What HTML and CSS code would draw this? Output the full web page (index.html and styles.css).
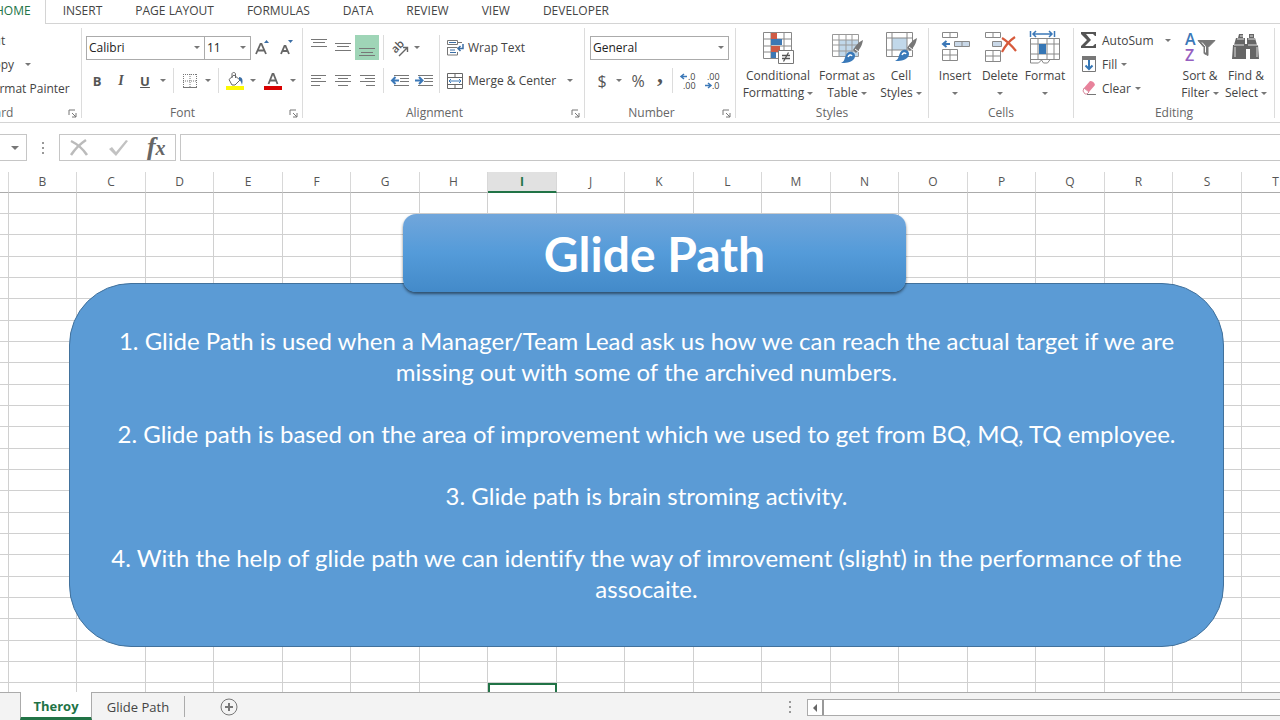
FILE: index.html
```html
<!DOCTYPE html>
<html lang="en">
<head>
  <meta charset="UTF-8">
  <title>Glide Path</title>
  <link rel="stylesheet" href="styles.css">
</head>
<body>
  <nav class="tabs">
    <button class="tab active">HOME</button>
    <button class="tab">INSERT</button>
    <button class="tab">PAGE LAYOUT</button>
    <button class="tab">FORMULAS</button>
    <button class="tab">DATA</button>
    <button class="tab">REVIEW</button>
    <button class="tab">VIEW</button>
    <button class="tab">DEVELOPER</button>
  </nav>

  <div class="ribbon">
    <section class="group clipboard">
      <div class="stack">
        <button class="small">Cut</button>
        <button class="small">Copy <i class="arrow far"></i></button>
        <button class="small">Format Painter</button>
      </div>
      <div class="caption">Clipboard</div>
      <button class="launcher" aria-label="Clipboard settings"><svg width="9" height="9" viewBox="0 0 9 9"><path d="M1 6V1h6M4 4l4 4M8 4v4H4"/></svg></button>
    </section>

    <section class="group font">
      <div class="row">
        <span class="combo family"><select aria-label="Font"><option>Calibri</option></select></span>
        <span class="combo size"><select aria-label="Font size"><option>11</option></select></span>
        <button class="tool grow" aria-label="Increase font size"><svg width="18" height="20" viewBox="0 0 18 20"><path d="M2 16 6.500 6h1L12 16M4 12.500h6" fill="none" stroke="#666" stroke-width="1.800"/><path d="M10 5l2.500-3L15 5z" fill="#3b6ea5"/></svg></button>
        <button class="tool" aria-label="Decrease font size"><svg width="18" height="20" viewBox="0 0 18 20"><path d="M3 16 6.500 8h1L11 16M5 13h4" fill="none" stroke="#666" stroke-width="1.800"/><path d="M10 2h5l-2.500 3z" fill="#3b6ea5"/></svg></button>
      </div>
      <div class="row">
        <button class="tool bold">B</button>
        <button class="tool italic">I</button>
        <button class="tool under">U</button>
        <button class="drop" aria-label="Underline styles"><i class="arrow"></i></button>
        <span class="sep"></span>
        <button class="tool" aria-label="Borders"><svg width="16" height="16" viewBox="0 0 16 16" fill="none" stroke="#777"><path stroke-dasharray="1 1" d="M1.500 1v13M14.500 1v13M8 1v13M1 1.500h14M1 8h14"/><path d="M1 14.500h14"/></svg></button>
        <button class="drop" aria-label="Border styles"><i class="arrow"></i></button>
        <span class="sep"></span>
        <button class="tool" aria-label="Fill color"><svg width="20" height="20" viewBox="0 0 20 20"><path d="M4 8.500 9 4l6 5-5 5H7z" fill="#fff" stroke="#666"/><path d="M7 7V3c0-2 3.500-2 3.500 0v4" fill="none" stroke="#666"/><path d="M14 6c4 0 4 4 3 8-1-3-1-4-3-5z" fill="#3b6ea5"/><path d="M1 15h18v4H1z" fill="#fdf905"/></svg></button>
        <button class="drop" aria-label="More fill colors"><i class="arrow"></i></button>
        <button class="tool wide" aria-label="Font color"><svg width="20" height="20" viewBox="0 0 20 20"><path d="M5.500 13 9.500 3h1l4 10M7 9.500h6" fill="none" stroke="#666" stroke-width="1.800"/><path d="M1 15h18v4H1z" fill="#d80000"/></svg></button>
        <button class="drop" aria-label="More font colors"><i class="arrow"></i></button>
      </div>
      <div class="caption">Font</div>
      <button class="launcher" aria-label="Font settings"><svg width="9" height="9" viewBox="0 0 9 9"><path d="M1 6V1h6M4 4l4 4M8 4v4H4"/></svg></button>
    </section>

    <section class="group alignment">
      <div class="halves">
        <div class="aligns">
          <div class="row">
            <button class="tool" aria-label="Top align"><svg width="16" height="20" viewBox="0 0 16 20" class="lines"><path d="M0 1.500h16M2 4.500h12M0 8.500h16"/></svg></button>
            <button class="tool" aria-label="Middle align"><svg width="16" height="20" viewBox="0 0 16 20" class="lines"><path d="M0 5.500h16M2 8.500h12M0 12.500h16"/></svg></button>
            <button class="tool on" aria-label="Bottom align"><svg width="16" height="20" viewBox="0 0 16 20" class="lines"><path d="M0 10.500h16M2 14.500h12M0 17.500h16"/></svg></button>
            <span class="sep"></span>
            <button class="tool" aria-label="Orientation"><svg width="18" height="18" viewBox="0 0 18 18"><text x="1" y="12" transform="rotate(-45 6 9)" font-size="11" font-weight="600" fill="#555">ab</text><path d="M8 17l8-8M12 8.500h4.500V13" fill="none" stroke="#666" stroke-width="1.400"/></svg></button>
            <button class="drop slim" aria-label="Orientation styles"><i class="arrow"></i></button>
          </div>
          <div class="row">
            <button class="tool" aria-label="Align left"><svg width="16" height="14" viewBox="0 0 16 14" class="lines"><path d="M0 1.500h15M0 4.500h10M0 7.500h15M0 11.500h9"/></svg></button>
            <button class="tool" aria-label="Center"><svg width="16" height="14" viewBox="0 0 16 14" class="lines"><path d="M0 1.500h16M3 4.500h10M0 7.500h16M3 11.500h10"/></svg></button>
            <button class="tool" aria-label="Align right"><svg width="16" height="14" viewBox="0 0 16 14" class="lines"><path d="M1 1.500h15M6 4.500h10M1 7.500h15M7 11.500h9"/></svg></button>
            <span class="sep"></span>
            <button class="tool" aria-label="Decrease indent"><svg width="18" height="14" viewBox="0 0 18 14" class="lines"><path d="M3 1.500h15M9 4.500h9M9 7.500h9M3 11.500h15"/><path class="blue" d="M1 6.500h7M4.500 3 1 6.500 4.500 10"/></svg></button>
            <button class="tool" aria-label="Increase indent"><svg width="18" height="14" viewBox="0 0 18 14" class="lines"><path d="M3 1.500h15M9 4.500h9M9 7.500h9M3 11.500h15"/><path class="blue" d="M0 6.500h7M4 3l3.500 3.500L4 10"/></svg></button>
          </div>
        </div>
        <div class="wraps">
          <button class="small"><svg width="18" height="18" viewBox="0 0 18 18" fill="none" stroke="#777"><path d="M1.500 1.500h10v4h-10zM1.500 8.500h10M1.500 8v8h10v-3M11 3.500h5"/><path d="M3 3.500h7M4 11h5M4 13.500h6" stroke="#3b6ea5"/><path d="M17 5v4.500h-5M14.500 7 12 9.500l2.500 2.500" stroke="#3b6ea5" stroke-width="1.500"/></svg>Wrap Text</button>
          <button class="small"><svg width="18" height="18" viewBox="0 0 18 18" fill="none" stroke="#666"><path d="M1.500 1.500h15v15h-15zM1 5.500h16M1 12.500h16M9 1v4M9 13v4"/><path d="M3 9h12M5 7 3 9l2 2M13 7l2 2-2 2" stroke="#3b78b8"/></svg>Merge &amp; Center <i class="arrow far"></i></button>
        </div>
      </div>
      <div class="caption">Alignment</div>
      <button class="launcher" aria-label="Alignment settings"><svg width="9" height="9" viewBox="0 0 9 9"><path d="M1 6V1h6M4 4l4 4M8 4v4H4"/></svg></button>
    </section>

    <section class="group number">
      <div class="row">
        <span class="combo format"><select aria-label="Number format"><option>General</option></select></span>
      </div>
      <div class="row">
        <button class="tool big">$</button>
        <button class="drop slim" aria-label="Currencies"><i class="arrow"></i></button>
        <button class="tool big wide">%</button>
        <button class="tool comma">,</button>
        <span class="sep"></span>
        <button class="tool" aria-label="Increase decimal"><svg width="18" height="18" viewBox="0 0 18 18" class="decimals"><text x="8" y="8">.0</text><text x="3" y="17">.00</text><path d="M1 4.500h6M4 2 1 4.500 4 7"/></svg></button>
        <button class="tool" aria-label="Decrease decimal"><svg width="18" height="18" viewBox="0 0 18 18" class="decimals"><text x="3" y="8">.00</text><text x="8" y="17">.0</text><path d="M1 13.500h6M4 11l3 2.500L4 16"/></svg></button>
      </div>
      <div class="caption">Number</div>
      <button class="launcher" aria-label="Number settings"><svg width="9" height="9" viewBox="0 0 9 9"><path d="M1 6V1h6M4 4l4 4M8 4v4H4"/></svg></button>
    </section>

    <section class="group styles">
      <div class="larges">
        <button class="large conditional">
          <svg width="32" height="34" viewBox="0 0 32 34"><path d="M1.500 1.500h28v26h-28zM9 1v27M22 1v27M1 8h29M1 15h29M1 21h29" fill="#fff" stroke="#888"/><path d="M9 2h6v6H9zM9 15h9v6H9z" fill="#cf5b45"/><path d="M9 8h11v6H9zM9 21h5v6H9z" fill="#3d78b4"/><path d="M16.500 19.500h15v13h-15z" fill="#fff" stroke="#777"/><path d="M20 24.500h8M20 27.500h8M26.500 21.500l-5 9" fill="none" stroke="#555" stroke-width="1.300"/></svg>
          <span>Conditional<br>Formatting <i class="arrow"></i></span>
        </button>
        <button class="large format-as">
          <svg width="32" height="34" viewBox="0 0 32 34"><path d="M1.500 3.500h26v22h-26z" fill="#fff"/><path d="M8 9h19v16H8z" fill="#c1d8ea"/><path d="M1.500 3.500h26v22h-26zM1 9h27M1 14h27M1 20h27M8 3v23M15 3v23M21 3v23" fill="none" stroke="#999"/><path d="M32 9c-5 2-8 7-10 10l3 3c4-4 6-7 7-13z" fill="#777"/><path d="M24 18l4 3" stroke="#fff"/><path d="M21 21c3 1 4 4 2 7-3 4-9 4-13 4 4-2 3-4 5-8 1-2 3-4 6-3z" fill="#3979b9"/><path d="M17 26c1-2 3-3 4-1" fill="none" stroke="#fff" stroke-width="1.500"/></svg>
          <span>Format as<br>Table <i class="arrow"></i></span>
        </button>
        <button class="large">
          <svg width="32" height="34" viewBox="0 0 32 34"><path d="M1.500 1.500h26v24h-26z" fill="#fff"/><path d="M7 7h15v12H7z" fill="#c1d8ea"/><path d="M1.500 1.500h26v24h-26zM1 7h27M1 19h27M7 1v25M22 1v25" fill="none" stroke="#888"/><path d="M32 7c-5 2-8 7-10 10l3 3c4-4 6-7 7-13z" fill="#777"/><path d="M24 16l4 3" stroke="#fff"/><path d="M21 19c3 1 4 4 2 7-3 4-9 4-13 4 4-2 3-4 5-8 1-2 3-4 6-3z" fill="#3979b9"/><path d="M17 24c1-2 3-3 4-1" fill="none" stroke="#fff" stroke-width="1.500"/></svg>
          <span>Cell<br>Styles <i class="arrow"></i></span>
        </button>
      </div>
      <div class="caption">Styles</div>
    </section>

    <section class="group cells">
      <div class="larges">
        <button class="large">
          <svg width="32" height="34" viewBox="0 0 32 34" fill="#fff" stroke="#888"><path d="M3.500 1.500h15v5h-15zM11 1v6M3.500 18.500h15v11h-15zM3 24h16M11 18v12"/><path d="M15.500 10.500h15v5h-15zM23 10v6" fill="#c9d8e8"/><path d="M4 13h7M7.500 10 4 13l3.500 3" fill="none" stroke="#3b78b8" stroke-width="2"/></svg>
          <span>Insert<br><i class="arrow"></i></span>
        </button>
        <button class="large">
          <svg width="32" height="34" viewBox="0 0 32 34" fill="#fff" stroke="#888"><path d="M1.500 1.500h15v5h-15zM9 1v6M1.500 19.500h15v11h-15zM1 25h16M9 19v12"/><path d="M8.500 10.500h9v5h-9z" fill="#c9d8e8"/><path d="M18 7c5 3 10 8 14 13M31 6c-6 4-10 9-13 15" fill="none" stroke="#d75a3b" stroke-width="2.200"/></svg>
          <span>Delete<br><i class="arrow"></i></span>
        </button>
        <button class="large">
          <svg width="32" height="34" viewBox="0 0 32 34" fill="none" stroke="#888"><path d="M1.500 7.500h29v21h-29zM1 13h30M1 23h30M9 7v22M18 7v22M25 7v22M1.500 28v4h8l3-3 2 3h4l3-4"/><path d="M10 13h7v10h-7z" fill="#3576b5" stroke="none"/><path d="M1.500 0v6M25.500 0v6M4 3h19M7 0 4 3l3 3M20 0l3 3-3 3" stroke="#3b78b8" stroke-width="1.500"/></svg>
          <span>Format<br><i class="arrow"></i></span>
        </button>
      </div>
      <div class="caption">Cells</div>
    </section>

    <section class="group editing">
      <div class="halves">
        <div class="stack">
          <button class="small"><svg width="18" height="18" viewBox="0 0 18 18"><path d="M1 1h15v4h-1l-2-2H6l5 6-6 6h8l2-2h1v4H1v-2l6-6-6-6z" fill="#555"/></svg>AutoSum <i class="arrow far"></i></button>
          <button class="small"><svg width="18" height="18" viewBox="0 0 18 18"><path d="M2.500 1.500h13v15h-13z" fill="#fff" stroke="#777"/><path d="M2 1h14v4H2z" fill="#777"/><path d="M9 5v9M5.500 10.500 9 14l3.500-3.500" fill="none" stroke="#3576b5" stroke-width="2"/></svg>Fill <i class="arrow"></i></button>
          <button class="small"><svg width="18" height="18" viewBox="0 0 18 18"><path d="M4 9l6-7q4 0 5 4l-6 7z" fill="#e8829b"/><path d="M4 9l5 4-2 2H5l-2-3z" fill="#fff" stroke="#d9899c"/><path d="M7 15.500h9" stroke="#777"/></svg>Clear <i class="arrow"></i></button>
        </div>
        <div class="larges">
          <button class="large">
            <svg width="32" height="34" viewBox="0 0 32 34"><text x="1" y="14" font-size="16" font-weight="600" fill="#3b78b8">A</text><text x="1" y="30" font-size="16" font-weight="600" fill="#9560c0">Z</text><path d="M14 9.500h17l-7 7v8l-4-2v-6z" fill="#777" stroke="#777"/><path d="M18 11.500l3.500 4v6" fill="none" stroke="#fff"/></svg>
            <span>Sort &amp;<br>Filter <i class="arrow"></i></span>
          </button>
          <button class="large">
            <svg width="32" height="34" viewBox="0 0 32 34" fill="#666"><path d="M9 3h4v4h2v6h2V7h2V3h5v4h1l2 7h1l1 14h-9V18h-4v10H2l1-14h1l2-7h2z"/><path d="M7 8h7M18 8h7M4 14h10M18 14h10M5 16v10M27 16v10M10 5h3M20 5h3" fill="none" stroke="#fff" stroke-width=".8"/></svg>
            <span>Find &amp;<br>Select <i class="arrow"></i></span>
          </button>
        </div>
      </div>
      <div class="caption">Editing</div>
    </section>
  </div>

  <div class="formula">
    <div class="namebox"><i class="arrow wide"></i></div>
    <span class="dots"><i></i><i></i><i></i></span>
    <div class="entry">
      <button aria-label="Cancel"><svg width="20" height="18" viewBox="0 0 20 18"><path d="M2 2c6 3 12 8 16 14M17 1C11 5 6 10 2 16" fill="none" stroke="#bbb" stroke-width="2.500"/></svg></button>
      <button aria-label="Enter"><svg width="20" height="18" viewBox="0 0 20 18"><path d="M1 10l3-2 4 5L18 1l2 1L8 17z" fill="#c2c2c2"/></svg></button>
      <button class="fx">f<small>x</small></button>
    </div>
    <input type="text" aria-label="Formula bar">
  </div>

  <main class="sheet">
    <table class="cellgrid" id="cellgrid"></table>
    <div class="shape body">
      <p>1. Glide Path is used when a Manager/Team Lead ask us how we can reach the actual target if we are<br>missing out with some of the archived numbers.</p>
      <p>2. Glide path is based on the area of improvement which we used to get from BQ, MQ, TQ employee.</p>
      <p>3. Glide path is brain stroming activity.</p>
      <p>4. With the help of glide path we can identify the way of imrovement (slight) in the performance of the<br>assocaite.</p>
    </div>
    <h1 class="shape title">Glide Path</h1>
  </main>

  <footer class="sheets">
    <button class="sheet-tab active">Theroy</button>
    <button class="sheet-tab">Glide Path</button>
    <button class="add" aria-label="New sheet"><svg width="18" height="18" viewBox="0 0 18 18" fill="none" stroke="#777"><circle cx="9" cy="9" r="8"/><path d="M9 5v8M5 9h8" stroke-width="2"/></svg></button>
    <span class="dots"><i></i><i></i><i></i></span>
    <div class="scroll"><button aria-label="Scroll left"></button></div>
  </footer>

  <script>
    const letters = 'BCDEFGHIJKLMNOPQRST'.split('');
    const selected = 'I', selectedRow = 24;
    let html = '<colgroup><col class="edge">';
    letters.forEach((l, i) => { html += `<col class="${i % 2 ? 'odd' : 'even'}">`; });
    html += '</colgroup><thead><tr><th></th>';
    letters.forEach(l => { html += `<th${l === selected ? ' class="picked"' : ''}>${l}</th>`; });
    html += '</tr></thead><tbody>';
    for (let r = 1; r <= 25; r++) {
      html += '<tr><td></td>';
      letters.forEach(l => { html += `<td${l === selected && r === selectedRow ? ' class="picked"' : ''}></td>`; });
      html += '</tr>';
    }
    document.getElementById('cellgrid').innerHTML = html + '</tbody>';
  </script>
</body>
</html>
```

FILE: styles.css
```css
* { box-sizing: border-box; }
body { margin: 0; height: 100vh; display: flex; flex-direction: column; overflow: hidden; background: #fff; color: #444; font: 12px "Open Sans", "Noto Sans", sans-serif; }
button { margin: 0; padding: 0; border: 0; background: none; color: inherit; font: inherit; white-space: nowrap; }
svg { display: block; flex: none; overflow: visible; }

/* ribbon tabs */
.tabs { position: relative; display: flex; gap: 1px; height: 24px; flex: none; border-bottom: 1px solid #d4d4d4; }
.tab { height: 24px; padding: 0 16px 3px; }
.tab.active { margin-left: -21px; padding-right: 14px; color: #217346; background: #fff; border-right: 1px solid #d4d4d4; }

/* ribbon */
.ribbon { display: flex; flex: none; height: 99px; padding: 4px 0; border-bottom: 1px solid #d4d4d4; overflow: hidden; }
.group { position: relative; flex: none; display: flex; flex-direction: column; border-right: 1px solid #dcdcdc; }
.clipboard { width: 82px; }
.font { width: 221px; padding-left: 3px; }
.alignment { width: 282px; padding-left: 4px; }
.number { width: 151px; padding-left: 5px; }
.styles { width: 193px; }
.cells { width: 145px; }
.editing { width: 201px; }
.caption { margin-top: auto; line-height: 10px; text-align: center; color: #666; }
.font .caption, .alignment .caption, .number .caption { margin-right: 22px; }
.clipboard .caption { margin-left: -41px; margin-right: auto; }
.launcher { position: absolute; right: 4px; bottom: 0; }
.launcher path { fill: none; stroke: #777; }
.row { display: flex; align-items: center; height: 25px; margin-bottom: 8px; }
.group > .row:first-child, .aligns > .row:first-child { margin-top: 7px; }
.tool { display: flex; align-items: center; justify-content: center; width: 24px; height: 25px; color: #555; }
.tool.wide { width: 28px; }
.tool.on { background: #9fd5b7; }
.bold { font-weight: 700; font-size: 13px; }
.italic { font: italic 700 14px "Liberation Serif", serif; }
.under { font-weight: 700; font-size: 13px; text-decoration: underline; }
.big { font-size: 16px; }
.comma { width: 16px; padding-bottom: 12px; font: 700 24px "Liberation Serif", serif; }
.drop { display: flex; justify-content: center; align-items: center; width: 12px; height: 25px; }
.drop.slim { width: 10px; }
.sep { width: 1px; height: 25px; margin: 0 4px; background: #dcdcdc; }
.arrow { display: inline-block; vertical-align: middle; border: 3px solid transparent; border-top-color: #777; border-bottom: 0; }
.arrow.wide { border-width: 4px; border-bottom: 0; }
.arrow.far { margin-left: 7px; }
.combo { position: relative; display: block; height: 24px; }
.combo::after { content: ""; position: absolute; right: 5px; top: 10px; border: 3px solid transparent; border-top-color: #777; border-bottom: 0; }
.combo select { width: 100%; height: 24px; padding: 0 2px; appearance: none; border: 1px solid #ababab; border-radius: 0; background: #fff; color: #222; font: inherit; }
.family { width: 119px; margin-left: 1px; }
.size { width: 46px; }
.size select { border-left: 0; }
.format { width: 139px; }

.lines { fill: none; stroke: #777; }
.lines .blue { stroke: #3b78b8; stroke-width: 2; }
.decimals { font-size: 9px; fill: #444; }
.decimals path { fill: none; stroke: #3b78b8; stroke-width: 1.5; }
.halves { display: flex; }
.aligns { width: 132px; }
.wraps { display: flex; flex-direction: column; gap: 8px; margin-top: 7px; padding-left: 6px; height: 58px; border-left: 1px solid #dcdcdc; }
.small { display: flex; align-items: center; gap: 4px; height: 25px; }
.stack { display: flex; flex-direction: column; }
.clipboard .stack { margin-left: -14px; }
.editing .stack { width: 103px; padding-left: 6px; }
.editing .stack .small, .clipboard .stack .small { height: 24px; }

.larges { display: flex; justify-content: center; }
.large { display: flex; flex-direction: column; align-items: center; width: 46px; padding-top: 3px; line-height: 17px; }
.large span { margin-top: 2px; }
.large.conditional { width: 76px; }
.large.format-as { width: 62px; }
.cells .large { width: 45px; }
.cells .larges { margin-right: 2px; }

/* formula bar */
.formula { display: flex; flex: none; height: 49px; padding: 11px 0; }
.namebox { width: 27px; border: 1px solid #c6c6c6; border-left: 0; display: flex; align-items: center; justify-content: flex-end; padding-right: 7px; }
.dots { display: flex; flex-direction: column; justify-content: center; gap: 3px; }
.dots i { width: 2px; height: 2px; background: #999; }
.formula .dots { width: 32px; align-items: center; }
.entry { display: flex; align-items: center; justify-content: space-around; width: 117px; border: 1px solid #c6c6c6; }
.fx { font: italic 700 26px/22px "Liberation Serif", serif; color: #666; }
.fx small { font-size: 20px; }
.formula input { flex: 1; min-width: 0; margin-left: 4px; border: 1px solid #c6c6c6; border-right: 0; }

/* worksheet */
.sheet { position: relative; flex: 1; min-height: 0; overflow: hidden; }
.cellgrid { width: 1310px; border-collapse: separate; border-spacing: 0; table-layout: fixed; }
.edge { width: 9px; }
.even { width: 68px; }
.odd { width: 69px; }
.cellgrid th { height: 21px; padding: 0; border-right: 1px solid #d8d8d8; border-bottom: 1px solid #ababab; color: #555; font-weight: 400; line-height: 18px; }
.cellgrid td { height: 21px; padding: 0; border-right: 1px solid #d0d0d0; border-bottom: 1px solid #d0d0d0; }
.cellgrid tbody tr:nth-child(3n) td { height: 22px; }
.cellgrid th.picked { background: #e1e1e1; color: #217346; font-weight: 700; border-bottom: 2px solid #217346; }
.cellgrid td.picked { border: 2px solid #217346; }

/* drawn shapes */
.shape { position: absolute; color: #fff; font-family: Lato, "Open Sans", sans-serif; font-variant-ligatures: none; text-align: center; }
.body { left: 69px; top: 111px; width: 1155px; height: 364px; padding: 41px 0 0; border: 1px solid #41719c; border-radius: 62px; background: #5b9bd5; font-size: 24px; line-height: 31px; white-space: nowrap; }
.body p { margin: 0 0 31px; }
.title { left: 403px; top: 42px; width: 503px; height: 78px; margin: 0; border-radius: 13px; background: linear-gradient(#71a6db, #549bd9 50%, #438ac9); box-shadow: 0 2px 3px rgba(0, 0, 0, 0.5); font-size: 48px; font-weight: 700; line-height: 80px; }

/* sheet tabs */
.sheets { display: flex; align-items: stretch; flex: none; height: 28px; padding-left: 20px; border-top: 1px solid #ababab; background: #f3f3f3; font-size: 13px; }
.sheet-tab { width: 93px; margin: 3px 0; border-right: 1px solid #ababab; }
.sheet-tab.active { width: 72px; margin: -1px 0 0; padding-top: 3px; background: #fff; color: #217346; font-weight: 700; border: 1px solid #ababab; border-width: 0 1px; border-bottom: 3px solid #217346; }
.add { margin-left: 35px; }
.sheets .dots { margin-left: auto; }
.scroll { flex: 0 1 473px; height: 17px; margin: 6px 0 0 16px; border: 1px solid #ababab; border-right: 0; background: #fff; }
.scroll button { display: block; width: 16px; height: 15px; border-right: 2px solid #999; }
.scroll button::before { content: ""; display: block; width: 0; margin: 0 auto; border: 4px solid transparent; border-right-color: #666; border-left: 0; }
```
